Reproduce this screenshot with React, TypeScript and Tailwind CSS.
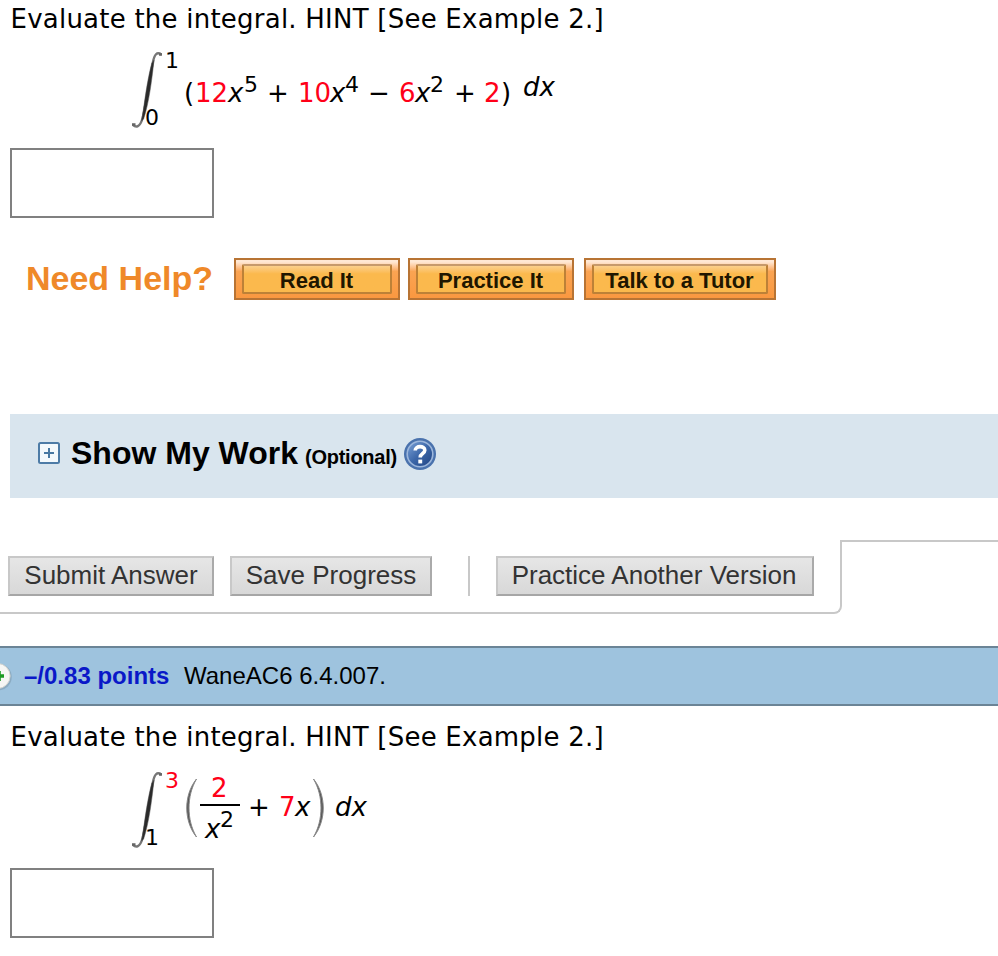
import React from 'react';

interface TermProps {
  className?: string;
  children: React.ReactNode;
}

// One piece of a formula, 26px text with its own width
const Term: React.FC<TermProps> = ({ className = '', children }) => (
  <span className={`block shrink-0 text-[26px] leading-[32px] ${className}`}>{children}</span>
);

// Exponents and limits
const Small: React.FC<TermProps> = ({ className = '', children }) => (
  <span className={`block w-[14px] shrink-0 text-[22px] leading-[26px] ${className}`}>{children}</span>
);

const IntegralSign = () => (
  <svg width="32" height="78" viewBox="0 0 32 78" fill="none">
    <path
      d="M0.5 73.5 C4 77 8 76 10.3 68 C14 54 17.5 27 20.8 12 C22.3 3 25 0.5 29.5 3.5"
      stroke="#777"
      strokeWidth="2.4"
    />
    <path
      d="M9.5 70 C12 58 14 34 19.8 12 L22 9 C20 28 17 52 11.6 68 Z"
      fill="#2a2a2a"
      stroke="#555"
      strokeWidth="0.5"
    />
    <path d="M0 73.6h3.5M27 3.6h3" stroke="#666" strokeWidth="2.5" />
  </svg>
);

const BigParen = ({ flip = false }: { flip?: boolean }) => (
  <svg width="14" height="60" viewBox="0 0 14 60" className={flip ? '-scale-x-100' : ''}>
    <path d="M11.5 1 C-1.5 17 -1.5 43 11.5 59 C1.5 42 1.5 18 11.5 1Z" fill="#555" stroke="#888" strokeWidth="1" />
  </svg>
);

const Integral: React.FC<{ upper: React.ReactNode; lower: string }> = ({ upper, lower }) => (
  <div className="relative h-[78px] w-[52px] shrink-0">
    <IntegralSign />
    <span className="absolute left-[33px] top-[-3px] text-[22px] leading-[26px]">{upper}</span>
    <span className="absolute left-[13px] top-[54px] text-[22px] leading-[26px]">{lower}</span>
  </div>
);

const Question = () => (
  <p className="h-8 pl-[10.5px] text-[26px] leading-[32px] tracking-[0.23px]">
    Evaluate the integral. HINT [See Example 2.]
  </p>
);

const AnswerBox = () => (
  <input type="text" className="ml-[10px] block h-[70px] w-[204px] border-2 border-[#808080] bg-white px-2 outline-none" />
);

const HelpButton: React.FC<TermProps> = ({ className = '', children }) => (
  <button
    className={`h-[42px] border-2 border-[#b87434] bg-linear-to-b from-[#ffe8d4] from-5% via-[#faa452] via-30% to-[#fa9840] px-[6px] py-[4px] ${className}`}
  >
    <span className="flex h-[30px] items-center justify-center rounded-[2px] border-2 border-[#bd8137] border-t-[#c79a6c] bg-linear-to-b from-[#fcd08b] to-[#fbb94d] to-30% pt-[3px] pr-px font-['Liberation_Sans'] text-[22px] leading-none font-bold whitespace-nowrap text-[#201600]">
      {children}
    </span>
  </button>
);

const GrayButton: React.FC<TermProps> = ({ className = '', children }) => (
  <button
    className={`h-10 border-2 border-t-[#c8c8c8] border-r-[#aaa] border-b-[#a6a6a6] border-l-[#c8c8c8] bg-linear-to-b from-[#e6e6e6] to-[#d8d8d8] pb-[2px] text-[26px] leading-[32px] whitespace-nowrap text-[#333] ${className}`}
  >
    {children}
  </button>
);

const ExpandIcon = () => (
  <svg width="22" height="22" viewBox="0 0 22 22">
    <rect x="1" y="1" width="20" height="20" rx="1.5" fill="#f4f9fc" stroke="#4d7ba6" strokeWidth="2" />
    <path d="M11 6v10M6 11h10" stroke="#4878a2" strokeWidth="2" />
  </svg>
);

const HelpIcon = () => (
  <svg width="32" height="32" viewBox="0 0 32 32">
    <defs>
      <linearGradient id="help" x1="0" y1="0" x2="1" y2="1">
        <stop offset="0" stopColor="#7fa4d8" />
        <stop offset="0.5" stopColor="#3c67a9" />
        <stop offset="1" stopColor="#1f4280" />
      </linearGradient>
    </defs>
    <circle cx="16" cy="16" r="16" fill="#4a72ad" />
    <circle cx="16" cy="16" r="12.8" fill="url(#help)" stroke="#9db7dc" strokeWidth="1.6" />
    <path
      d="M11.2 12.6 C11.2 7.4 20.8 7.4 20.8 12.3 C20.8 15.6 16.2 15.4 16.2 19.4"
      fill="none"
      stroke="#fff"
      strokeWidth="3.6"
    />
    <rect x="14.3" y="21.6" width="3.9" height="3.8" fill="#fff" />
  </svg>
);

const PlusBadge = () => (
  <svg width="12" height="30" viewBox="0 0 12 30">
    <circle cx="-1.6" cy="16" r="13.3" fill="#7893a6" opacity="0.5" />
    <circle cx="-2.4" cy="15" r="12.5" fill="#f6f6f4" stroke="#d5d5d0" />
    <path d="M-6 15H4M-1 10v10" stroke="#1c9a22" strokeWidth="3.6" />
  </svg>
);

export default function App() {
  return (
    <div className="h-[956px] w-[998px] overflow-hidden bg-white pt-[3px] font-['DejaVu_Sans',sans-serif] text-black">
      {/* FIRST QUESTION */}
      <Question />

      <div className="mt-[16px] flex h-[78px] pl-[132px] whitespace-nowrap">
        <Integral upper="1" lower="0" />
        <div className="flex pt-[26px]">
          <Term className="w-[11px]">(</Term>
          <Term className="w-[33px] text-[#ff0018]">12</Term>
          <Term className="w-[16px] italic">x</Term>
          <Small className="-mt-[5px]">5</Small>
          <Term className="ml-[9px] w-[31px]">+</Term>
          <Term className="w-[32px] text-[#ff0018]">10</Term>
          <Term className="w-[15px] italic">x</Term>
          <Small className="-mt-[5px]">4</Small>
          <Term className="ml-[9px] w-[31px]">−</Term>
          <Term className="w-[16px] text-[#ff0018]">6</Term>
          <Term className="w-[15px] italic">x</Term>
          <Small className="-mt-[5px]">2</Small>
          <Term className="ml-[10px] w-[30px]">+</Term>
          <Term className="w-[17px] text-[#ff0018]">2</Term>
          <Term className="w-[22px]">)</Term>
          <Term className="-mt-[6px] italic">dx</Term>
        </div>
      </div>

      <div className="mt-[19px]">
        <AnswerBox />
      </div>

      {/* HELP BUTTONS */}
      <div className="mt-10 flex h-[42px] pl-[26px]">
        <span className="w-[208px] font-['Liberation_Sans'] text-[34px] leading-[40px] font-bold text-[#ef8929]">
          Need Help?
        </span>
        <HelpButton className="w-[166px]">Read It</HelpButton>
        <HelpButton className="ml-2 w-[166px]">Practice It</HelpButton>
        <HelpButton className="ml-[10px] w-[192px]">Talk to a Tutor</HelpButton>
      </div>

      {/* SHOW MY WORK */}
      <div className="mt-[114px] ml-[10px] flex h-[84px] bg-[#d9e5ee] pl-[28px] font-['Liberation_Sans'] font-bold">
        <div className="pt-[28px]">
          <ExpandIcon />
        </div>
        <span className="ml-[11px] w-[234px] pt-[21px] text-[32px] leading-[36px] whitespace-nowrap">Show My Work</span>
        <span className="w-[99px] pt-[31px] text-[20px] leading-[24px] tracking-[-0.25px]">(Optional)</span>
        <div className="pt-[24px]">
          <HelpIcon />
        </div>
      </div>

      {/* SUBMIT ROW */}
      <div className="mt-[42px] flex h-[74px] font-['Liberation_Sans']">
        <div className="flex w-[842px] shrink-0 rounded-br-[8px] border-r-2 border-b-2 border-[#c8c8c8] pt-4 pl-2">
          <GrayButton className="w-[206px]">Submit Answer</GrayButton>
          <GrayButton className="ml-4 w-[202px]">Save Progress</GrayButton>
          <div className="ml-9 h-10 w-[2px] bg-[#c8c8c8]" />
          <GrayButton className="ml-[26px] w-[318px] pr-[2px]">Practice Another Version</GrayButton>
        </div>
        <div className="h-[2px] flex-1 bg-[#c8c8c8]" />
      </div>

      {/* SECOND QUESTION */}
      <div className="mt-8 flex h-[60px] items-center border-y-2 border-[#6b8496] bg-[#9ec3de] font-['Liberation_Sans'] text-[24px]">
        <PlusBadge />
        <span className="ml-[12px] w-[160px] font-bold text-[#0a18c8]">–/0.83 points</span>
        <span>WaneAC6 6.4.007.</span>
      </div>

      <div className="mt-[15px]">
        <Question />
      </div>

      <div className="mt-[18px] flex h-[78px] pl-[132px] whitespace-nowrap">
        <Integral upper={<span className="text-[#ff0018]">3</span>} lower="1" />
        <div className="ml-px pt-[7px]">
          <BigParen />
        </div>
        <div className="ml-px w-[40px]">
          <Term className="h-[33px] pt-px pl-[11px] text-[#ff0018]">2</Term>
          <div className="h-[2px] bg-black" />
          <div className="flex pl-[5px]">
            <Term className="mt-[7px] w-[15px] italic">x</Term>
            <Small className="mt-px">2</Small>
          </div>
        </div>
        <div className="flex pt-[20px]">
          <Term className="ml-[8px] w-[31px]">+</Term>
          <Term className="w-[16px] text-[#ff0018]">7</Term>
          <Term className="w-[16px] italic">x</Term>
        </div>
        <div className="pt-[7px]">
          <BigParen flip />
        </div>
        <Term className="ml-[10px] pt-[20px] italic">dx</Term>
      </div>

      <div className="mt-[19px]">
        <AnswerBox />
      </div>
    </div>
  );
}
